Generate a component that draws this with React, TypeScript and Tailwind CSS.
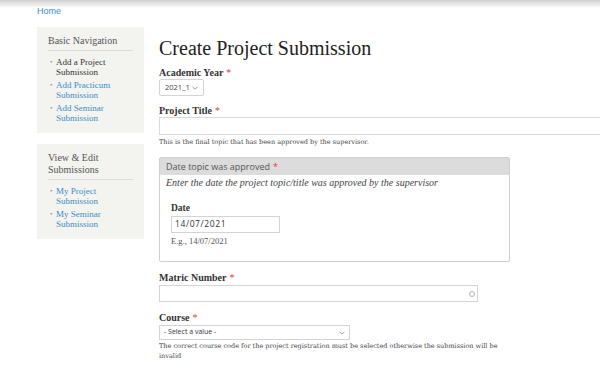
import React from "react";

const serif = "font-['Liberation_Serif',_'Times_New_Roman',_serif]";
const sans = "font-['Open_Sans',_'Liberation_Sans',_sans-serif]";
const slab = "font-['DejaVu_Serif',_'Liberation_Serif',_serif]";

function Chevron({ className }: { className?: string }) {
  return (
    <svg viewBox="0 0 10 6" className={className} fill="none" stroke="currentColor" strokeWidth="1.2">
      <path d="M1 1l4 4 4-4" />
    </svg>
  );
}

function Req() {
  return <span className="ml-[3px] text-[#e0403a] font-normal">*</span>;
}

function SideBlock({ title, items }: { title: React.ReactNode; items: { label: string; link: boolean }[] }) {
  return (
    <div className="bg-[#f3f3ef] pl-[11px] pr-[11px] pt-[8px] pb-[10px]">
      <div className="text-[10px] leading-[12px] text-[#555] pb-[3px] border-b border-[#dcdcd6]">{title}</div>
      <ul className="mt-[6px] flex flex-col gap-[3px]">
        {items.map((it) => (
          <li key={it.label} className="flex text-[9px] leading-[10px]">
            <span className="w-[8px] shrink-0 pl-[2px] text-[#888] text-[7px]">•</span>
            <span className={it.link ? "text-[#3b8ec6]" : "text-[#333]"}>{it.label}</span>
          </li>
        ))}
      </ul>
    </div>
  );
}

export default function App() {
  return (
    <div className={`relative w-[600px] h-[370px] overflow-hidden bg-white ${serif}`}>
      <div className="absolute inset-x-0 top-0 h-[8px] bg-gradient-to-b from-[#cfcfcf] to-white" />
      <div className={`pl-[37px] pt-[6px] h-[27px] text-[9px] leading-[10px] text-[#3b8ec6] font-['Liberation_Sans',_Arial,_sans-serif]`}>
        Home
      </div>
      <div className="flex">
        <aside className="ml-[37px] w-[107px] shrink-0 flex flex-col gap-[11px]">
          <SideBlock
            title="Basic Navigation"
            items={[
              { label: "Add a Project Submission", link: false },
              { label: "Add Practicum Submission", link: true },
              { label: "Add Seminar Submission", link: true },
            ]}
          />
          <SideBlock
            title={
              <>
                View &amp; Edit
                <br />
                Submissions
              </>
            }
            items={[
              { label: "My Project Submission", link: true },
              { label: "My Seminar Submission", link: true },
            ]}
          />
        </aside>
        <main className="ml-[15px] flex-1 pt-[9px] flex flex-col items-start text-[#333]">
          <h1 className="text-[20px] leading-[24px] text-[#222]">Create Project Submission</h1>

          <label className="mt-[7px] text-[10px] leading-[12px] font-bold">
            Academic Year<Req />
          </label>
          <div className={`h-[17px] w-[45px] border border-[#d4d4d4] rounded-[2px] flex items-center justify-between px-[5px] ${sans} text-[7.5px] text-[#444]`}>
            <span>2021_1</span>
            <Chevron className="w-[6px] h-[4px] text-[#777]" />
          </div>

          <label className="mt-[9px] text-[10px] leading-[12px] font-bold">
            Project Title<Req />
          </label>
          <div className="h-[18px] w-[470px] border border-[#dadada]" />
          <p className={`mt-[2px] text-[6.5px] leading-[10px] text-[#444] ${slab}`}>
            This is the final topic that has been approved by the supervisor.
          </p>

          <fieldset className="mt-[10px] w-[351px] h-[105px] border border-[#cfcfcf] rounded-[2px]">
            <div className={`h-[17px] bg-[#dcdcdc] pl-[6px] flex items-center ${sans} text-[9px] text-[#555]`}>
              Date topic was approved<Req />
            </div>
            <p className="mt-[2px] pl-[6px] italic text-[10px] leading-[12px] text-[#444]">
              Enter the date the project topic/title was approved by the supervisor
            </p>
            <div className="pl-[11px]">
              <div className="mt-[13px] text-[9.5px] leading-[12px] font-bold">Date</div>
              <div className={`mt-[2px] h-[17px] w-[109px] border border-[#d4d4d4] flex items-center pl-[3px] ${sans} text-[8.5px] tracking-[0.6px] text-[#333]`}>
                14/07/2021
              </div>
              <div className="mt-[3px] text-[8.5px] leading-[10px] text-[#555]">E.g., 14/07/2021</div>
            </div>
          </fieldset>

          <label className="mt-[10px] text-[10px] leading-[12px] font-bold">
            Matric Number<Req />
          </label>
          <div className="mt-[1px] h-[17px] w-[319px] border border-[#d4d4d4] flex items-center justify-end pr-[2px]">
            <span className="w-[6px] h-[6px] rounded-full border border-[#b5b5b5]" />
          </div>

          <label className="mt-[10px] text-[10px] leading-[12px] font-bold">
            Course<Req />
          </label>
          <div className={`mt-[1px] h-[15px] w-[191px] border border-[#d4d4d4] flex items-center justify-between pl-[4px] pr-[4px] ${sans} text-[7px] text-[#333]`}>
            <span>- Select a value -</span>
            <Chevron className="w-[6px] h-[4px] text-[#777]" />
          </div>
          <p className={`mt-[1px] w-[345px] text-[6.5px] leading-[10px] text-[#444] ${slab}`}>
            The correct course code for the project registration must be selected otherwise the submission will be invalid
          </p>
        </main>
      </div>
    </div>
  );
}
